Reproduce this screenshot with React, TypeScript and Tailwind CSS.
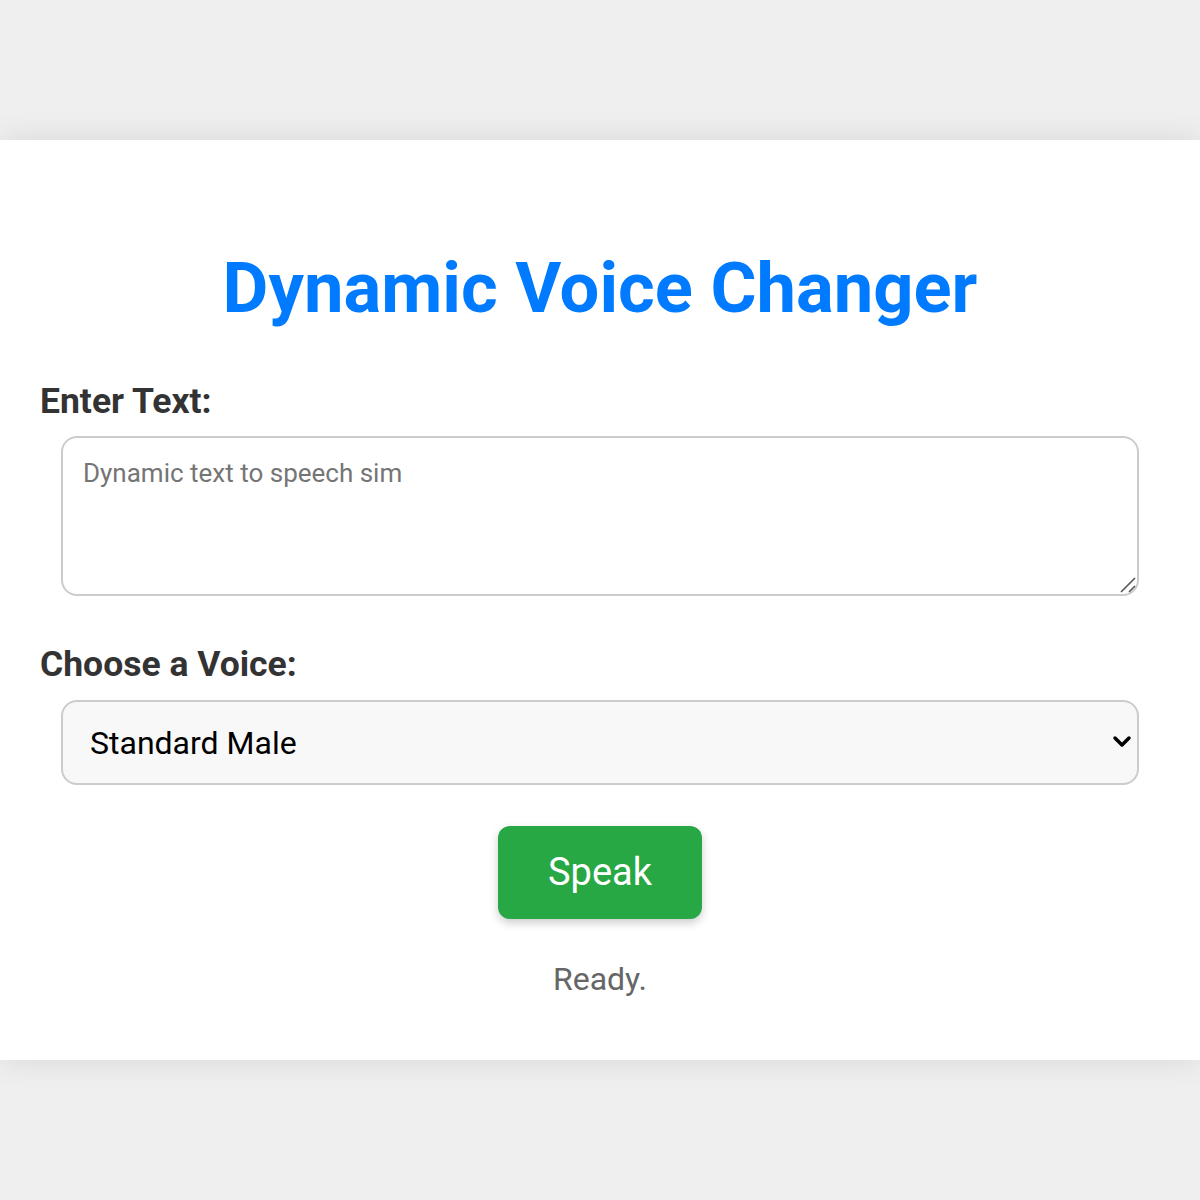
import { useState } from "react";

const App = () => {
  const [text, setText] = useState("");
  const [voice, setVoice] = useState("standard-male");
  const [status, setStatus] = useState("Ready.");

  return (
    <div className="min-h-screen bg-[#efefef] pt-[140px] font-['Roboto',sans-serif]">
      <div className="bg-white h-[920px] px-10 pt-[100px] shadow-[0_0_30px_rgba(0,0,0,0.1)]">
        <h1 className="text-center text-[70.5px] leading-[96px] font-bold text-[#007bff]">Dynamic Voice Changer</h1>

        <label className="block mt-[41px] text-[35.5px] leading-[48px] font-bold text-[#333]">Enter Text:</label>
        <div className="px-[21px] mt-[11px] relative">
          <textarea
            value={text}
            onChange={(e) => setText(e.target.value)}
            placeholder="Dynamic text to speech sim"
            className="block w-full h-[160px] border-2 border-[#ccc] rounded-[16px] px-[20px] py-[18px] text-[26px] leading-[34px] text-[#333] placeholder:text-[#757575] outline-none resize-none"
          />
          {/* resize grip */}
          <svg className="absolute right-[23px] bottom-[2px] pointer-events-none" width="18" height="18" viewBox="0 0 18 18">
            <path d="M2 16 L16 2 M10 16 L16 10" fill="none" stroke="#555" strokeWidth="1.6" />
          </svg>
        </div>

        <label className="block mt-[44px] text-[35.5px] leading-[48px] font-bold text-[#333]">Choose a Voice:</label>
        <div className="px-[21px] mt-[12px] relative">
          <select
            value={voice}
            onChange={(e) => setVoice(e.target.value)}
            className="block w-full h-[85px] appearance-none bg-[#f8f8f8] border-2 border-[#ccc] rounded-[16px] pl-[27px] text-[32px] text-black outline-none"
          >
            <option value="standard-male">Standard Male</option>
            <option value="standard-female">Standard Female</option>
            <option value="robot">Robot</option>
          </select>
          <svg className="absolute right-[28px] top-[33px] pointer-events-none" width="20" height="18" viewBox="0 0 20 18">
            <path d="M3 5 L10 12 L17 5" fill="none" stroke="#000" strokeWidth="3.5" strokeLinecap="round" strokeLinejoin="round" />
          </svg>
        </div>

        <div className="flex justify-center mt-[41px]">
          <button
            onClick={() => setStatus("Speaking...")}
            className="w-[204px] h-[93px] bg-[#28a745] text-white text-[38px] rounded-[12px] shadow-[0_4px_10px_rgba(0,0,0,0.2)]"
          >
            Speak
          </button>
        </div>

        <p className="text-center mt-[40px] text-[32px] leading-[40px] text-[#666]">{status}</p>
      </div>
    </div>
  );
};

export default App;
